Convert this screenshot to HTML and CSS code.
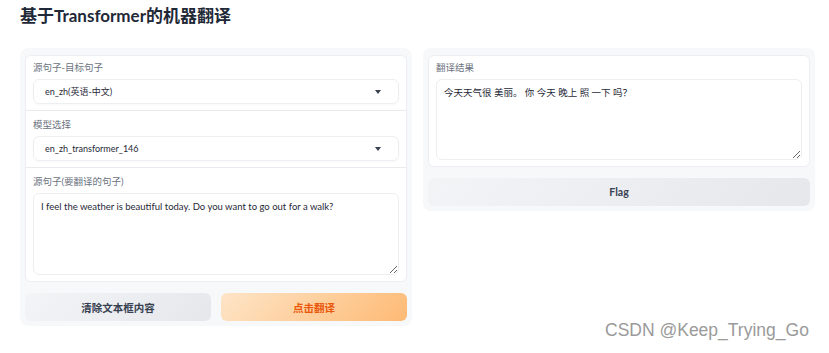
FILE: index.html
```html
<!DOCTYPE html>
<html lang="zh">
<head>
  <meta charset="UTF-8" />
  <meta name="viewport" content="width=device-width, initial-scale=1.0" />
  <title>基于Transformer的机器翻译</title>
  <link rel="stylesheet" href="styles.css">
</head>
<body>
  <h1 class="page-title">基于Transformer的机器翻译</h1>

  <div class="row">
    <div class="panel">
      <div class="card">
        <div class="field">
          <div class="label">源句子-目标句子</div>
          <div class="select">
            <span>en_zh(英语-中文)</span>
            <svg class="caret" width="6" height="4" viewBox="0 0 6 4"><path d="M0 0h6L3 4z" fill="#374151"/></svg>
          </div>
        </div>
        <div class="field">
          <div class="label">模型选择</div>
          <div class="select">
            <span>en_zh_transformer_146</span>
            <svg class="caret" width="6" height="4" viewBox="0 0 6 4"><path d="M0 0h6L3 4z" fill="#374151"/></svg>
          </div>
        </div>
        <div class="field">
          <div class="label">源句子(要翻译的句子)</div>
          <textarea class="text-box src-box">I feel the weather is beautiful today. Do you want to go out for a walk?</textarea>
        </div>
      </div>
      <div class="btn-row">
        <button class="btn btn-gray">清除文本框内容</button>
        <button class="btn btn-orange">点击翻译</button>
      </div>
    </div>

    <div class="panel">
      <div class="card">
        <div class="field">
          <div class="label">翻译结果</div>
          <textarea class="text-box out-box">今天天气很 美丽。 你 今天 晚上 照 一下 吗？</textarea>
        </div>
      </div>
      <button class="btn btn-gray">Flag</button>
    </div>
  </div>

  <div class="watermark">CSDN @Keep_Trying_Go</div>
</body>
</html>
```

FILE: styles.css
```css
html, body {
  margin: 0;
  padding: 0;
  background: #fff;
}
body {
  padding: 0 14px 0 20px;
  font-family: Lato, "Noto Sans CJK SC", sans-serif;
  color: #1f2937;
}

.page-title {
  margin: 0;
  padding-top: 3px;
  font-size: 17px;
  line-height: 26px;
  font-weight: 700;
  color: #1f2937;
}

.row {
  display: grid;
  grid-template-columns: 1fr 1fr;
  gap: 11px;
  margin-top: 19px;
  align-items: start;
}

.panel {
  background: #f7f8fa;
  border-radius: 8px;
  padding: 7px 5px 5px;
  display: flex;
  flex-direction: column;
  gap: 11px;
}

.card {
  background: #fff;
  border: 1px solid #eceef1;
  border-radius: 6px;
}

.field {
  padding: 7px 7px 6px;
}
.field:first-child {
  padding-top: 5px;
}
.field + .field {
  border-top: 1px solid #e8eaed;
}

.label {
  font-size: 9.5px;
  line-height: 14px;
  color: #6b7280;
  margin-bottom: 4px;
}

.select {
  height: 25px;
  box-sizing: border-box;
  border: 1px solid #eceef1;
  border-radius: 6px;
  box-shadow: 0 1px 2px rgba(0, 0, 0, 0.03);
  padding: 0 17px 0 11px;
  display: flex;
  align-items: center;
  justify-content: space-between;
  font-size: 9px;
  color: #1f2937;
}

.text-box {
  display: block;
  width: 100%;
  box-sizing: border-box;
  border: 1px solid #eceef1;
  border-radius: 6px;
  padding: 6px 7px;
  font-family: Lato, "Noto Sans CJK SC", sans-serif;
  font-size: 9.5px;
  line-height: 14px;
  color: #1f2937;
  outline: none;
  resize: vertical;
}
.src-box { height: 82px; }
.out-box { height: 81px; }

.btn-row {
  display: grid;
  grid-template-columns: 1fr 1fr;
  gap: 10px;
}

.btn {
  height: 28px;
  border: none;
  border-radius: 6px;
  font-family: Lato, "Noto Sans CJK SC", sans-serif;
  font-size: 10.5px;
  font-weight: 700;
  cursor: pointer;
}
.btn-gray {
  background: linear-gradient(135deg, #f3f4f6, #e5e7eb);
  color: #374151;
}
.btn-orange {
  background: linear-gradient(135deg, #fee5c8, #fdba74);
  color: #ea580c;
}

.watermark {
  position: absolute;
  left: 605px;
  top: 320px;
  font-family: "Liberation Sans", Arial, sans-serif;
  font-size: 17.5px;
  color: #9a9a9a;
}
```
